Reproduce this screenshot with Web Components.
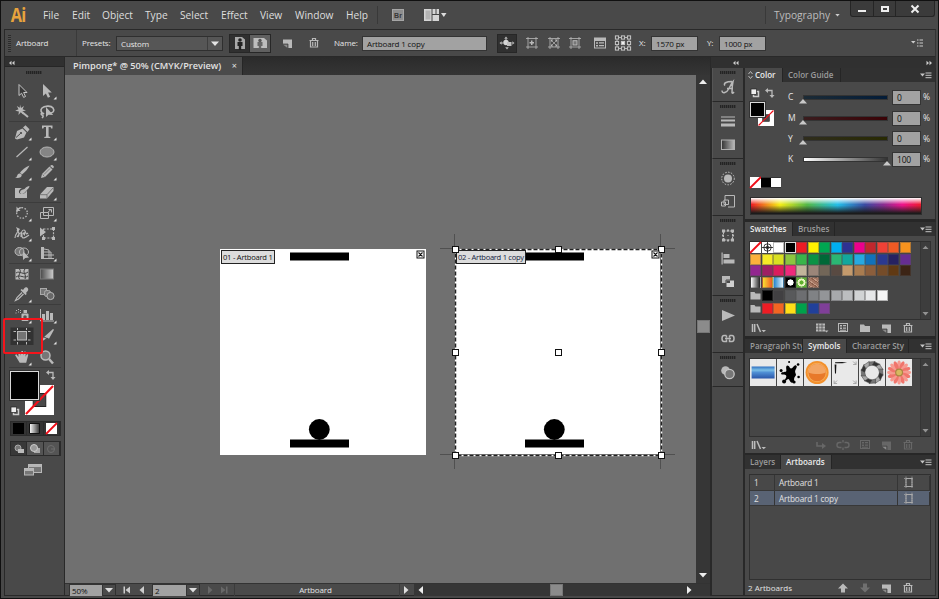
<!DOCTYPE html>
<html lang="en">
<head>
<meta charset="utf-8">
<title>Pimpong</title>
<style>
    html, body {
        margin: 0;
        background: #1b1b1b;
    }
    body {
        width: 939px;
        height: 599px;
        overflow: hidden;
        font: 500 8px/12px "Open Sans", "Noto Sans", sans-serif;
        color: #e6e6e6;
        --panel: #494949;
        --strip: #313131;
        --line: #292929;
        --field: #a2a2a2;
        --icon: #b9b9b9;
    }
</style>
</head>
<body>
<app-window></app-window>

<script>
// Every icon is drawn around its own centre, so 0,0 is the middle of the cell.
const corner = '<path d="M9.5 5.5v3h-3z" fill="#e4e4e4"/>';
const lineIcon = (d, w = 1) => `<path d="${d}" fill="none" stroke="currentColor" stroke-width="${w}"/>`;
const solid = d => `<path d="${d}" fill="currentColor"/>`;

const ICONS = {
    select: '<path d="M-3-6.500v11l2.600-2.300 2 4.200 1.900-.9-1.900-4h3.400z" fill="#3a3a3a" stroke="#c4c4c4"/>',
    direct: solid('M-4-7v12l2.900-2.600 2 4.300 2.200-1-2-4.200h3.700z') + corner,
    wand: lineIcon('M0 1l6 5', 2) + solid('M-2-6.500l1 3.500 3-2-1.400 3.300 3.400 1.200-3.600.8 1 3.500-2.600-2.600-2.400 2.800.5-3.600-3.700-.6 3.300-1.500-1.700-3.200 3 1.600z'),
    lasso: lineIcon('M-3 3c-3-1-4-4-2-6s9-3 11 0 0 5-3 5M-3 3c-2-2-4 0-2 1s1 2 0 3', 1.6) + solid('M-1-4v10l2.600-2.300 4.600.2z'),
    pen: solid('M-7 6.500l2-7.500 5.500-2.500 4 4-2.500 5-7 2z') + solid('M1-4.500l2.500-2.200 4 4L5.500 0z') + '<path d="M-6 5.500l4.500-4" stroke="#454545"/><circle cx="-1" cy="1" r="1.100" fill="#454545"/>' + corner,
    type: solid('M-5-6.500h10.500v3h-1.300l-.6-1.600h-2v9.500l1.700.6v1h-6v-1l1.700-.6v-9.500h-2l-.7 1.600h-1.300z') + corner,
    line: lineIcon('M-5.500 5l11-10', 1.200) + corner,
    ellipse: '<ellipse rx="7" ry="5" fill="#858585" stroke="#b5b5b5"/>' + corner,
    brush: solid('M7.500-6.500C3-4.500 0-2 -2 .5l2 2C3 0 6-3 7.500-6.500z') + solid('M-7 5.500c3 0 1.500-4 4.500-4 2.500 0 3 2.500 1 3.700-1.500 1-4 1-5.500.3z') + corner,
    pencil: solid('M-6 6l1-4L2.500-5.500l3 3L-2 5z') + solid('M3-6l1.500-1c1-.6 3 1.500 2.300 2.300L6-3.400z') + '<path d="M-4.500 2.500l2 2M-3 2.500l6-6" stroke="#6e6e6e" stroke-width=".8"/>' + corner,
    blob: solid('M-7-4h7c-3 1.500-4 4-2 5.500s6 0 7-3.500v8h-12z') + solid('M-2 1c0-4 4-3 5-4.500s3-2.500 4.500-2.500c0 2-2 3-3 4.500S0 4-2 1z'),
    eraser: solid('M-7 2.500l7-7.500h6.500v4L0 6.500h-7z') + '<path d="M-7 2.700h7l6.300-7M0 2.700v3.500" fill="none" stroke="#666" stroke-width=".8"/>' + corner,
    rotate: '<circle r="5.300" fill="none" stroke="#b9b9b9" stroke-width="1.300" stroke-dasharray="1.500 1.500"/><path d="M-5.300-.5a5.300 5.300 0 0 1 5-4.800" fill="none" stroke="#b9b9b9" stroke-width="1.300"/>' + solid('M-5.500-6.500v4.500h4z') + corner,
    scale: lineIcon('M-6.500-.5h8v6h-8zM-3.500-5.500h10v8h-10zM0 0l4-3.500M1.500-3.500h3v3') + corner,
    width: lineIcon('M-7 5c0-5 4-5 3-9M-4 4c2-3 0-6-1-7M-1 4c0-5 1-7 3-7s1 6 4 3M-5 4c4-6 5-5 5-1s4 1 7-1', 1.200) + solid('M-6-6l4 2-2 3zM0 0l3-1 0 4z') + corner,
    free: '<rect x="-3.500" y="-4" width="10" height="9" fill="none" stroke="#b9b9b9" stroke-width="1.200" stroke-dasharray="2 1.300"/>' + solid('M-7-5.500v9l6-4.500zM5-6h3v3H5zM5 4h3v3H5zM-5 4h3v3h-3z'),
    shape: '<ellipse cx="-2.500" cy="-1.500" rx="4.500" ry="4" fill="#777" stroke="#b9b9b9"/><ellipse cx="2" cy="-1" rx="4.500" ry="4" fill="none" stroke="#b9b9b9"/>' + solid('M1-2v9l2.300-2 3.700-.5z') + corner,
    perspective: solid('M-6-6h3v12h-3z') + lineIcon('M-3-4l5 1v8M-3-1h7v7M-3 2h10M-3 5.500h10') + corner,
    mesh: '<rect x="-6.500" y="-5" width="13" height="10.500" fill="#b9b9b9"/><path d="M-6-1c4-3 7 3 12-1M-6 3c4-3 8 2 12-1M-2.500-5c3 4-3 6 0 10M3-5c-3 3 2 6 0 10" stroke="#3f3f3f" fill="none"/>',
    gradient: '<rect x="-6.500" y="-5" width="13" height="10" fill="url(#g)" stroke="#777"/><linearGradient id="g"><stop stop-color="#4a4a4a"/><stop offset="1" stop-color="#ccc"/></linearGradient>',
    dropper: solid('M1-4l1.500-2c2-2 5 1 3.200 3L4-1l.8 1L3.500 1-1.500-4l1.200-1z') + lineIcon('M0-1.500l-5 5-1.500 3 3-1.500 5-5', 1.200) + corner,
    blend: '<rect x="-6.500" y="-5.500" width="6" height="6" fill="#777" stroke="#aaa"/><rect x="-2.500" y="-3.500" width="6" height="6" rx="2" fill="#7a7a7a" stroke="#aaa"/><circle cx="3.500" cy="2" r="3.600" fill="#686868" stroke="#b9b9b9"/>',
    spray: '<rect x="-.5" y="-1.500" width="7" height="7.500" rx="1" fill="#b9b9b9"/><circle cx="3" cy="2" r="1.800" fill="#555"/>' + solid('M1.500-5h3.500v3H1.500zM-2-5h1v1h-1zM-4-6h1v1h-1zM-6-5h1v1h-1zM-4-3.500h1v1h-1zM-6.500-2.500h1v1h-1zM-2-3h1v1h-1z') + corner,
    graph: solid('M-5-1h3v6h-3zM-1-4h3v9h-3zM3-2h3v7H3z') + lineIcon('M-6.500-6v12h13.500') + corner,
    artboard: '<rect x="-11.500" y="-8.500" width="23" height="17.500" fill="#323232"/><rect x="-4.500" y="-4.500" width="9" height="8.500" fill="#747474" stroke="#bbb"/><path d="M-4.500-8v2M4.500-8v2M-4.500 6v2.500M4.500 6v2.500M-8.500-4.500h2.500M6-4.500h2.500M-8.500 4h2.500M6 4h2.500" stroke="#bbb"/>',
    slice: solid('M-6 6l3-5L6-7l1 .7-5 9-1.500-1z') + '<path d="M-3 1l4 2" stroke="#494949"/>' + corner,
    hand: solid('M-7-2l1.500-.7L-3.600 0v-5h1.800l.6 3.800L-.6-6H1l.3 4.600L2.400-5.500l1.500.2-.4 5L5-3l1.300.7-2.100 8h-6.500z') + corner,
    zoom: '<circle cx="-1.500" cy="-1.500" r="4.500" fill="#777" stroke="#b9b9b9" stroke-width="1.500"/>' + lineIcon('M2 2l4 4.500', 2.500),
    swap: lineIcon('M-3-2.500h5v5', 1.300) + solid('M-5-2.500l3-2.500v5zM2 5l-2.500-3h5z'),
    defaults: '<rect x="-1.500" y="-1.500" width="5" height="5" fill="none" stroke="#ccc" stroke-width="1.500"/><rect x="-4" y="-4" width="5.500" height="5.500" fill="#eee" stroke="#222" stroke-width=".7"/>',
    screens: '<rect x="-4.500" y="-5.500" width="13" height="8" fill="#777" stroke="#b9b9b9"/><rect x="-8.500" y="-1.500" width="9" height="6.500" fill="#777" stroke="#b9b9b9"/><path d="M-8 0h8M-4-4H8" stroke="#ccc" stroke-width="1.500"/>',

    note: solid('M-4-3.500H5V5H1V1h-5z') + '<path d="M-4 1.500H.5V5z" fill="#8a8a8a"/><path d="M-4 1H1V5" fill="none" stroke="#494949" stroke-width=".8"/>',
    trash: lineIcon('M-4.500-2.500h9M-1.500-3v-1.500h3V-3M-3.500-2v6h7v-6M-1.300-1v4M1.300-1v4', 1.200),
    folder: solid('M-5-3.500h4l1 1.500h5v6H-5z'),
    grid: solid('M-5-4.500h9v8h-9z') + '<path d="M-2.300-4.500v8M1-4.500v8M-5-2h9M-5 1h9" stroke="#494949" stroke-width=".7"/>' + solid('M3.500 2.500h4l-2 2z'),
    list: '<rect x="-4.500" y="-4.500" width="9" height="8" fill="none" stroke="currentColor"/>' + solid('M-3-3h2v1.500h-2zM-3-.5h2V1h-2zM0-3h3v1.300H0zM0-.5h3V.8H0zM-3 1.700h6v1h-6z'),
    books: lineIcon('M-5.500-4v8M-3.300-4v8M-1-4l3.500 8', 1.500) + solid('M3.500 2h4.500l-2.300 2.300z'),
    up: solid('M0-4.500l5 5H2v4h-4v-4h-3z'),
    down: solid('M0 4.500l5-5H2v-4h-4v4h-3z'),
    place: lineIcon('M-4-3v4h6', 1.600) + solid('M1-2l4 3-4 3z'),
    breaklink: lineIcon('M-1.500-2.500h-2a2.500 2.500 0 0 0 0 5h2M1.500-2.500h2a2.500 2.500 0 0 1 0 5h-2M0-5v2.500M0 5V2.500', 1.400),
    sheet: '<rect x="-3" y="-4" width="6" height="8" fill="none" stroke="currentColor"/><path d="M-3-6v12M3-6v12M-5-4H5M-5 4H5" stroke="currentColor" stroke-width=".7" stroke-dasharray="1.500 1"/>',

    portrait: '<path d="M-5-6H2l3 2.500V6H-5z" fill="#a9a9a9"/><circle cy="-3" r="1.800" fill="#222"/><path d="M-2.500-1h5v4h-1.300v4h-2.400v-4h-1.300z" fill="#222"/>',
    landscape: '<path d="M-6.500-5H4l3 2.500V5H-6.500z" fill="#bdbdbd"/><circle cy="-2.500" r="1.700" fill="#555"/><path d="M-2.500-1h5v4h-1.300v2h-2.400v-2h-1.300z" fill="#666"/>',
    movecopy: '<circle cx="-1" cy="-.5" r="2.700" fill="#d5d5d5"/><path d="M0-1h4.500v4H0z" fill="#c0c0c0"/>' + solid('M-1-6.500l1.800 2.200h-3.600zM0 6.500l1.800-2.200h-3.600zM-7.500 0l2.200-1.800v3.600zM7.500 0L5.300-1.800v3.600z') + lineIcon('M-5.500 0h2M-1-4.500v1.500'),
    marks1: '<path d="M-4-6v12M4-6v12M-6-4.500H6M-6 4H6" stroke="currentColor" stroke-width=".8"/>' + solid('M-1-2.500h1.500v1.500h1.500v1.500H.5v1.500H-1V.5h-1.500v-1.500H-1z'),
    marks2: '<path d="M-4-6v12M4-6v12M-6-4.500H6M-6 4H6" stroke="currentColor" stroke-width=".8"/>' + solid('M-3-3.500h2.500L-3-1zM3-3.500H.5L3-1zM-3 3.500h2.500L-3 1zM3 3.500H.5L3 1z') + lineIcon('M-2-2l4 4M2-2l-4 4', .7),
    marks3: '<path d="M-4-6v12M4-6v12M-6-4.500H6M-6 4H6" stroke="currentColor" stroke-width=".8"/><rect x="-2" y="-2.300" width="4" height="4.300" fill="#777" stroke="currentColor"/>',
    options: '<rect x="-5.500" y="-5" width="11" height="10" fill="none" stroke="currentColor"/>' + solid('M-5-5H5v3H-5zM-4-.7h2v1.400h-2zM-1-.7h5V.5h-5zM-4 2h2v1.400h-2zM-1 2h5v1.300h-5z'),
    refpoint: [-5.500, 0, 5.500].map(y => [-6, 0, 6].map(x => `<rect x="${x - 1.600}" y="${y - 1.600}" width="3.200" height="3.200" fill="${x || y ? 'none' : '#eee'}" stroke="#c8c8c8"/>`).join('')).join('') + lineIcon('M-4-5.500h2M2-5.500h2M-4 5.500h2M2 5.500h2M-6-3.500v2M-6 1.500v2M6-3.500v2M6 1.500v2'),
    panelmenu: solid('M-6-2.500h5l-2.500 3z') + lineIcon('M-.5-3h6M-.5-.7h6M-.5 1.700h6'),
    barmenu: solid('M-6-2h4.500l-2.200 2.600z') + lineIcon('M0-3h1.500M2.500-3h3.500M0 0h1.500M2.500 0h3.500M0 3h1.500M2.500 3h3.500', 1.200),
    layout: '<rect x="-9" y="-6" width="15" height="12" fill="#d5d5d5"/><path d="M-7.500-4.500h5v9h-5z" fill="#b4b4b4"/><path d="M-1-6v12M-1-.5h7M3-6v5.500" stroke="#444"/>' + solid('M8-2h5.500L10.800 2z'),

    glyph: lineIcon('M-6 3c0 4 5 2 7-2s3-6 4-7c-1 4-1 8-1 11 0 1 1 1 2-.5M-1 1h6M-3-2c-2-2 1-4 7-4', 1.500),
    stroke: solid('M-7-5H7v1H-7zM-7-2H7v2H-7zM-7 2H7v3H-7z'),
    fade: '<rect x="-6.500" y="-4.500" width="13" height="9.500" fill="url(#f)" stroke="#b0b0b0"/><linearGradient id="f"><stop stop-color="#333"/><stop offset="1" stop-color="#bbb"/></linearGradient>',
    appearance: '<circle r="4" fill="#b9b9b9"/><circle r="6.300" fill="none" stroke="#c5c5c5" stroke-dasharray="1.500 1.400"/>',
    styles: lineIcon('M-3-1v-5H6.500V5.500H0M-6.500.5h4v4h-4zM-4-1.500h4.500v4.500H-4z'),
    transform: '<rect x="-4.500" y="-4.500" width="9" height="9" fill="none" stroke="#b9b9b9" stroke-dasharray="2 1"/>' + solid('M-6-6h3v3h-3zM3-6h3v3H3zM-6 3h3v3h-3zM3 3h3v3H3zM-1-6h2v2h-2zM-1 4h2v2h-2zM-6-1h2v2h-2zM4-1h2v2H4zM-.5-.5h1v1h-1z'),
    align: solid('M-6.500-6h1.200V6h-1.200zM-4.500-4.500h6v4h-6zM-4.500 1h11v4h-11z'),
    pathfinder: '<path d="M-6-5.500h8v7h-8z" fill="#b9b9b9"/><path d="M-2-1.500h8.500v7.500H-2z" fill="#d0d0d0" stroke="#494949"/><path d="M-1.500-1h3.500v2.500h-3.500z" fill="#494949"/>',
    play: solid('M-6-5.500L7 0-6 5.500z'),
    link: lineIcon('M-1.500-3h-2.500a2 3 0 0 0 0 6h2.500V1M-1.500-3v2M1.500-3H4a2 3 0 0 1 0 6H1.500V1M1.500-3v2M-3 0h6', 1.500),
    symbols: '<circle cx="-2.500" cy="-2" r="4.300" fill="#b9b9b9"/><circle cx="1.500" cy="1.500" r="4.700" fill="#777" stroke="#c5c5c5" stroke-width="1.300"/>',
    none: '<rect x="-5.500" y="-5.500" width="11" height="11" fill="#fff"/><path d="M-5.500 5.500l11-11" stroke="#f00d18" stroke-width="1.800"/>',
    register: '<rect x="-5.500" y="-5.500" width="11" height="11" fill="#fff"/><g fill="none" stroke="#111" stroke-width=".8"><circle r="3.700"/><circle r="1.500"/><path d="M-5.500 0h11M0-5.500v11"/></g>',
    closebox: '<rect x="-3.500" y="-3.500" width="7" height="7" fill="#fff" stroke="#111"/><path d="M-2-2l4 4M2-2l-4 4" stroke="#111" stroke-width="1.100"/>',
    triup: solid('M0-2.500L4 2h-8z'),
    tridown: solid('M0 2.500L4-2h-8z'),
    trileft: solid('M-2.500 0L2-4v8z'),
    triright: solid('M2.500 0L-2-4v8z'),
    first: solid('M-3.500-3.500h1.500v7h-1.500zM-1.500 0L3-3.500v7z'),
    last: solid('M3.500-3.500H2v7h1.500zM1.500 0L-3-3.500v7z'),
    collapse: solid('M-3 0L-.5-2.200V2.200zM0 0l2.500-2.200v4.400z'),
    expand: solid('M0 0l-2.500-2.200v4.400zM3 0L.5-2.200v4.400z'),
    updown: lineIcon('M-2-1l2-2.500L2-1M-2 1l2 2.500L2 1')
};

// Small helper: registers an element from a style block and a markup string.
function define(tag, css, markup) {
    customElements.define(tag, class extends HTMLElement {
        connectedCallback() {
            if (this.shadowRoot) return;
            this.attachShadow({ mode: 'open' });
            const html = typeof markup === 'function' ? markup(this) : markup;
            this.shadowRoot.innerHTML = `<style>* { box-sizing: border-box; } :host { box-sizing: border-box; } ${css}</style>${html}`;
        }
    });
}

const icon = (name, w = 12, h = 12, style = '') => `<ui-icon name="${name}" w="${w}" h="${h}" style="${style}"></ui-icon>`;

define('ui-icon', `
    :host { display: block; flex: none; color: var(--icon); }
    svg { display: block; overflow: visible; }
`, el => {
    const w = el.getAttribute('w') || 12;
    const h = el.getAttribute('h') || 12;
    return `<svg width="${w}" height="${h}" viewBox="${-w / 2} ${-h / 2} ${w} ${h}">${ICONS[el.getAttribute('name')]}</svg>`;
});

define('ui-field', `
    :host { display: block; flex: none; height: 15px; padding: 0 0 0 4px; background: var(--field);
        border: 1px solid #343434; color: #111; line-height: 13px; white-space: nowrap; overflow: hidden; }
`, '<slot></slot>');

// Row of short dark ticks used as a drag handle.
define('ui-grip', `
    :host { display: block; height: 3px; width: 16px; margin: 0 auto;
        background: repeating-linear-gradient(90deg, #242424 0 1px, #393939 1px 2px); }
`, '');

define('menu-bar', `
    :host { display: flex; height: 28px; align-items: center; font-weight: 400; font-size: 10.200px; line-height: 14px; color: #dedede; background: var(--panel); }
    .logo { width: 34px; padding-left: 2px; font: 700 19px/24px "Open Sans", sans-serif; letter-spacing: -1px; color: #e8a33d; transform: scaleX(.86); transform-origin: 0 50%; }
    .item { flex: none; white-space: nowrap; }
    .rule { width: 1px; height: 18px; background: #393939; }
    .br { display: grid; place-items: center; width: 12px; height: 12px; margin: 0 20px 0 14px; background: #8e8e8e; border: 1px solid #a6a6a6; font: 700 7px/9px "Liberation Sans", sans-serif; color: #373737; }
    .space { margin-left: auto; }
    .work { margin: 0 7px 0 8px; width: 54px; color: #bdbdbd; }
    .buttons { display: flex; align-self: flex-start; height: 16px; margin: 0 3px 0 10px; border: 1px solid #252525; border-top: 0; border-radius: 0 0 3px 3px; background: #3b3b3b; }
    .buttons span { display: grid; place-items: center; border-right: 1px solid #252525; }
    .buttons span:last-child { border: 0; }
`, () => `
    <div class="logo" style="margin-left:8px">Ai</div>
    ${[['File', 29], ['Edit', 30], ['Object', 43], ['Type', 35], ['Select', 41], ['Effect', 39], ['View', 35], ['Window', 51], ['Help', 31]]
        .map(([t, w]) => `<span class="item" style="width:${w}px">${t}</span>`).join('')}
    <i class="rule"></i><span class="br">Br</span>
    ${icon('layout', 18, 14, 'color:#ddd')}
    <i class="rule space"></i><span class="item work">Typography</span>
    ${icon('tridown', 5, 8, 'color:#ccc;transform:scale(.55)')}
    <div class="buttons">
        <span style="width:23px"><svg width="10" height="10"><path d="M1 6h8v2H1z" fill="#eee"/></svg></span>
        <span style="width:22px"><svg width="10" height="10"><path d="M2 3h6v4H2z" fill="none" stroke="#eee" stroke-width="2"/></svg></span>
        <span style="width:38px"><svg width="10" height="10"><path d="M1.500 1.500l7 7M8.500 1.500l-7 7" stroke="#eee" stroke-width="2"/></svg></span>
    </div>
`);

define('control-bar', `
    :host { display: flex; align-items: center; height: 28px; background: var(--panel); border: 1px solid var(--line); border-right-color: #333; white-space: nowrap; letter-spacing: -.15px; }
    :host > * { flex: none; }
    .grip { width: 3px; height: 17px; margin: 0 5px 0 3px; background: repeating-linear-gradient(#2b2b2b 0 1px, #4d4d4d 1px 2px); }
    .rule { width: 1px; height: 26px; background: #3a3a3a; }
    .select { display: flex; width: 107px; height: 15px; border: 1px solid #2f2f2f; background: #565656; line-height: 13px; padding-left: 4px; }
    .select ui-icon { margin-left: auto; border-left: 1px solid #3e3e3e; }
    .btn { display: grid; place-items: center; height: 19px; border: 1px solid #272727; background: #303030; }
    .btn.off { background: #606060; }
`, () => `
    <i class="grip"></i><span style="width:60px">Artboard</span><i class="rule"></i>
    <span style="margin-left:5px;width:34px">Presets:</span>
    <div class="select">Custom${icon('tridown', 14, 13, 'color:#e5e5e5')}</div>
    <div class="btn" style="margin-left:6px;width:21px">${icon('portrait', 16, 14)}</div>
    <div class="btn off" style="width:21px;border-left:0">${icon('landscape', 16, 14)}</div>
    ${icon('note', 12, 12, 'margin-left:10px')}
    ${icon('trash', 12, 12, 'margin-left:15px')}
    <span style="margin-left:14px;width:28px">Name:</span>
    <ui-field style="width:125px">Artboard 1 copy</ui-field>
    <div class="btn" style="margin-left:10px;width:20px">${icon('movecopy', 16, 16)}</div>
    ${icon('marks1', 12, 14, 'margin-left:9px')}
    ${icon('marks2', 12, 14, 'margin-left:10px')}
    ${icon('marks3', 12, 14, 'margin-left:9px')}
    ${icon('options', 12, 12, 'margin-left:13px')}
    ${icon('refpoint', 16, 16, 'margin-left:9px')}
    <span style="margin-left:8px;width:12px">X:</span><ui-field style="width:47px">1570 px</ui-field>
    <span style="margin-left:9px;width:12px">Y:</span><ui-field style="width:47px">1000 px</ui-field>
    ${icon('barmenu', 12, 12, 'margin-left:auto;margin-right:12px;color:#ccc')}
`);

const TOOLS = [
    ['select', 'direct', 'wand', 'lasso'],
    ['pen', 'type', 'line', 'ellipse', 'brush', 'pencil', 'blob', 'eraser'],
    ['rotate', 'scale', 'width', 'free', 'shape', 'perspective'],
    ['mesh', 'gradient', 'dropper', 'blend'],
    ['spray', 'graph', 'artboard', 'slice', 'hand', 'zoom']
];

define('fill-stroke', `
    :host { display: grid; grid-template: 14px 15px 15px / 15px 14px 15px; }
    :host([small]) { grid-template: 8px 7px 9px / 8px 7px 9px; }
    .stroke { grid-area: 2 / 2 / 4 / 4; }
    .stroke svg { display: block; width: 100%; height: 100%; }
    .fill { grid-area: 1 / 1 / 3 / 3; z-index: 1; background: #000; border: 1px solid #d9d9d9; outline: 1px solid #333; }
`, `
    <div class="stroke"><svg viewBox="0 0 30 30" preserveAspectRatio="none">
        <rect width="30" height="30" fill="#fff"/><rect x="8.500" y="8.500" width="13" height="13" fill="#494949" stroke="#222"/>
        <path d="M1 29L29 1" stroke="#f3101a" stroke-width="2.200"/></svg></div>
    <div class="fill"></div>
`);

define('tool-box', `
    :host { display: flex; flex-direction: column; position: relative; width: 59px; flex: none; padding-left: 1px; background: var(--panel); }
    header { height: 10px; margin-left: -1px; background: #303030; border-bottom: 1px solid #262626; padding: 2px 0 0 2px; }
    ui-grip { margin: 4px 0 7px 20px; }
    .group { display: grid; grid-template-columns: 26px 24px; place-items: center; margin: 0 3px; height: calc(var(--rows) * 20px + 1px); border-bottom: 1px solid #3c3c3c; }
    .group.tall { height: 63px; }
    .colors { display: grid; grid-template-columns: 44px 10px; padding: 3px 0 0 4px; }
    .modes { display: flex; margin: 5px 3px 0 4px; height: 15px; background: #333; border: 1px solid #2b2b2b; }
    .modes span { flex: 1; display: grid; place-items: center; border-right: 1px solid #2b2b2b; }
    .draw span { background: #545454; }
    .draw span:first-child { background: #383838; }
    .mark { position: absolute; left: -2px; top: 261px; width: 40px; height: 36px; border: 2px solid #f5141b; border-radius: 2px; }
`, () => `
    <header>${icon('collapse', 10, 8, 'color:#ccc')}</header>
    <ui-grip></ui-grip>
    ${TOOLS.map((names, i) => `<div class="group${i === 4 ? ' tall' : ''}" style="--rows:${names.length / 2}">${names.map(n => icon(n, 16, 16)).join('')}</div>`).join('')}
    <div class="colors"><fill-stroke></fill-stroke>${icon('swap', 8, 12, 'margin:-2px 0 0 -7px')}</div>
    <div style="height:0">${icon('defaults', 10, 10, 'margin:-9px 0 0 4px')}</div>
    <div class="modes" style="margin-top:6px">
        <span><svg width="11" height="11"><path d="M0 0h11v11H0z"/></svg></span>
        <span><svg width="11" height="11"><defs><linearGradient id="a"><stop stop-color="#fff"/><stop offset="1" stop-color="#333"/></linearGradient></defs><path d="M.5.500h10v10H.5z" fill="url(#a)" stroke="#111"/></svg></span>
        <span>${icon('none', 11, 11)}</span>
    </div>
    <div class="modes draw">
        <span><svg width="12" height="12"><circle cx="5" cy="5" r="3" fill="#777" stroke="#aaa"/><path d="M5 6h6v4H5z" fill="#bbb"/></svg></span>
        <span><svg width="12" height="12"><path d="M5 5h6v5H5z" fill="#aaa"/><circle cx="5" cy="5" r="3.500" fill="#999" stroke="#ccc"/></svg></span>
        <span><svg width="12" height="12"><circle cx="6" cy="6" r="3.500" fill="none" stroke="#6e6e6e"/><path d="M6 6h4" stroke="#6e6e6e"/></svg></span>
    </div>
    ${icon('screens', 18, 14, 'margin:7px 0 0 18px')}
    <div class="mark"></div>
`);

define('art-board', `
    :host { display: block; position: absolute; width: 206px; height: 206px; background: #fff; }
    svg { position: absolute; left: 0; top: 0; overflow: visible; }
    .name { position: absolute; left: 1px; top: 1px; height: 14px; padding: 0 1px; border: 1px solid #222; background: #dcdcdc; color: #111; font-weight: 400; font-size: 7.600px; letter-spacing: -.24px; line-height: 12px; white-space: nowrap; }
    :host([active]) .name { color: #141c40; letter-spacing: -.3px; }
`, el => {
    const spots = [0, 103, 206];
    const handles = spots.flatMap(y => spots.map(x => `<rect x="${x - 2.500}" y="${y - 2.500}" width="6" height="6" fill="#fff" stroke="#111"/>`)).join('');
    const frame = el.hasAttribute('active') ? `
        <path d="M-.5-15v235M205.500-15v235M-15-.5h235M-15 205.500h235" stroke="#505050"/>
        <rect x=".5" y=".5" width="206" height="206" fill="none" stroke="#fff" stroke-width="1.500"/>
        <rect x=".5" y=".5" width="206" height="206" fill="none" stroke="#222" stroke-width="1.500" stroke-dasharray="4 2"/>` : '';
    return `
        <svg width="206" height="206">
            <path d="M70 3.500h59v8H70zM70 190.500h59v8H70z"/><circle cx="99.300" cy="180.500" r="10.400"/>
            ${frame}
        </svg>
        <span class="name"><slot></slot></span>
        <svg width="206" height="206">${frame ? handles : ''}<g transform="translate(200.500 5.500)">${ICONS.closebox}</g></svg>
    `;
});

define('document-view', `
    :host { display: grid; grid-template: 18px 508px 12px / 631px 14px; width: 645px; flex: none; background: #363636; }
    .tabs { grid-column: 1 / 3; display: flex; background: linear-gradient(#2b2b2b, #353535); }
    .tab { display: flex; width: 178px; padding: 1px 0 0 8px; background: #4b4b4b; border-right: 1px solid #262626; font-weight: 600; font-size: 9.200px; line-height: 15px; white-space: nowrap; color: #e2e2e2; }
    .tab b { margin-left: auto; padding-right: 5px; font-weight: 400; font-size: 9px; }
    .canvas { position: relative; background: #707070; overflow: hidden; }
    .vbar { display: flex; flex-direction: column; align-items: center; justify-content: space-between; padding: 3px 0 4px; color: #ddd; }
    .thumb { background: #8b8b8b; border: 1px solid #777; width: 13px; height: 13px; }
    .status { grid-column: 1 / 3; display: flex; align-items: center; background: #4a4a4a; border-top: 1px solid #333; letter-spacing: -.1px; }
    .drop { display: grid; place-items: center; width: 13px; height: 12px; border: 1px solid #303030; border-left: 0; }
    ui-field { height: 12px; line-height: 12px; border-bottom: 0; }
    .rule { width: 1px; height: 12px; background: #3b3b3b; }
    .hbar { display: flex; flex: 1; align-items: center; height: 12px; margin-left: 4px; padding: 0 3px; background: #363636; }
`, () => `
    <div class="tabs"><div class="tab">Pimpong* @ 50% (CMYK/Preview)<b>×</b></div></div>
    <div class="canvas">
        <art-board style="left:155px;top:174px">01 - Artboard 1</art-board>
        <art-board active style="left:390px;top:174px">02 - Artboard 1 copy</art-board>
    </div>
    <div class="vbar">${icon('triup', 10, 8, 'color:#eee')}<i class="thumb" style="margin-bottom:4px"></i>${icon('tridown', 10, 8, 'color:#eee')}</div>
    <div class="status">
        <ui-field style="width:34px;margin-left:4px;padding-left:2px">50%</ui-field><span class="drop">${icon('tridown', 10, 8, 'color:#ddd')}</span>
        ${icon('first', 8, 8, 'margin-left:7px;color:#ccc')}${icon('trileft', 8, 8, 'margin-left:7px;color:#ccc')}
        <ui-field style="width:35px;margin-left:6px;padding-left:2px">2</ui-field><span class="drop">${icon('tridown', 10, 8, 'color:#ddd')}</span>
        ${icon('triright', 8, 8, 'margin-left:6px;color:#686868')}${icon('last', 8, 8, 'margin-left:6px;color:#686868')}
        <i class="rule" style="margin-left:6px"></i>
        <span style="width:164px;text-align:center;padding-right:3px">Artboard</span><i class="rule"></i>
        ${icon('triright', 8, 8, 'margin-left:2px;color:#ddd')}
        <div class="hbar">${icon('trileft', 8, 8, 'color:#eee')}<i class="thumb" style="margin-left:125px;height:12px"></i>${icon('triright', 8, 8, 'margin-left:auto;margin-right:14px;color:#eee')}</div>
    </div>
`);

define('icon-dock', `
    :host { display: block; width: 31px; flex: none; margin: 0 2px 0 1px; }
    .group { background: var(--panel); border-bottom: 1px solid #282828; border-left: 1px solid #555; padding: 3px 0 1px; }
    .group ui-icon { width: 16px; margin: -1px auto 1px; }
    ui-grip { margin-bottom: 3px; }
    .rest { height: 208px; background: var(--panel); }
`, () => [['glyph'], ['stroke', 'fade'], ['appearance', 'styles'], ['transform', 'align', 'pathfinder'], ['play', 'link'], ['symbols']]
    .map(g => `<div class="group"><ui-grip></ui-grip>${g.map(n => icon(n, 16, 23)).join('')}</div>`).join('') + '<div class="rest"></div>');

define('dock-panel', `
    :host { display: flex; flex-direction: column; background: var(--panel); border-right: 1px solid #2b2b2b; }
    nav { display: flex; flex: none; height: 14px; background: var(--strip); font-weight: 600; line-height: 14px; color: #9b9b9b; }
    nav span { flex: none; padding-left: 5px; border-right: 1px solid #252525; overflow: hidden; white-space: nowrap; }
    nav span.on { background: var(--panel); color: #ececec; }
    nav span ui-icon { display: inline-block; margin: 0 1px 0 -3px; vertical-align: -1px; }
    nav > ui-icon { margin: 2px 3px 0 auto; }
    .body { flex: 1; min-height: 0; display: flex; flex-direction: column; }
`, el => `
    <nav>${el.getAttribute('tabs').split(',').map(t => {
        const [name, width] = t.split(':');
        const on = name.startsWith('*');
        const label = name.replace('*', '');
        return `<span class="${on ? 'on' : ''}" style="width:${width}px">${label === 'Color' ? icon('updown', 7, 8) : ''}${label}</span>`;
    }).join('')}${icon('panelmenu', 12, 12, 'color:#c4c4c4')}</nav>
    <div class="body"><slot></slot></div>
`);

define('color-mixer', `
    :host { display: grid; grid-template: 89px 21px 1fr / 29px 1fr; flex: 1; padding: 5px 4px 0 5px; }
    .icons { display: flex; gap: 5px; height: 14px; margin-bottom: 2px; align-items: center; }
    .rows { display: grid; grid-template-rows: repeat(4, 20.700px); padding-left: 9px; }
    .row { display: grid; grid-template-columns: 10px 94px 29px 12px; align-items: center; font-size: 8.500px; }
    .row ui-field { letter-spacing: -.2px; }
    .track { position: relative; height: 5px; margin: 0 4px 0 5px; border: 1px solid #333; }
    .track ui-icon { position: absolute; top: 2px; left: -5px; color: #c9c9c9; }
    .track ui-icon.end { left: auto; right: -4px; }
    .quick { grid-column: 1 / 3; display: flex; align-items: center; height: 11px; margin-top: 1px; }
    .quick i { width: 10px; height: 11px; border: solid #333; border-width: 1px 0; }
    .spectrum { grid-column: 1 / 3; width: 172px; height: 18px; border: 1px solid #2e2e2e;
        background: linear-gradient(#fff, transparent 40%, transparent 45%, #1b1b1b 95%), linear-gradient(90deg, #ee1c24, #f6ee18 17%, #55b947 33%, #23bfea 51%, #3b4ba2 67%, #8a2d91 78%, #ee148c 89%, #ed1c2e); }
`, () => `
    <div style="margin-top:-1px">
        <div class="icons">${icon('defaults', 10, 10)}${icon('swap', 10, 10)}</div>
        <fill-stroke small style="width:24px"></fill-stroke>
    </div>
    <div class="rows">${[['C', 0, '#1c2b36, #031c38'], ['M', 0, '#3a1c1e, #3a0206'], ['Y', 0, '#2f2d1d, #282a02'], ['K', 100, '#fff, #333']].map(([n, v, c]) => `
        <div class="row"><span>${n}</span><div class="track" style="background:linear-gradient(90deg, ${c})"><ui-icon class="${v ? 'end' : ''}" name="triup" w="8" h="7"></ui-icon></div>
        <ui-field>${v}</ui-field><span style="padding-left:2px">%</span></div>`).join('')}</div>
    <div class="quick">${icon('none', 11, 11)}<i style="background:#000"></i><i style="background:#fff"></i></div>
    <div class="spectrum"></div>
`);

// Framed list with a scroll strip on its right edge.
define('scroll-box', `
    :host { display: flex; flex: none; margin: 5px 4px 0 4px; border: 1px solid #303030; background: #464646; }
    .content { flex: 1; min-width: 0; }
    .bar { display: flex; flex-direction: column; justify-content: space-between; align-items: center; width: 10px; padding: 3px 0; background: #3d3d3d; border-left: 1px solid #353535; }
`, () => `<div class="content"><slot></slot></div><div class="bar">${icon('triup', 5, 5, 'color:#929292;transform:scale(.75)')}${icon('tridown', 5, 5, 'color:#929292;transform:scale(.75)')}</div>`);

define('panel-footer', `
    :host { display: flex; flex: 1; align-items: center; padding: 0 21px 0 8px; }
    .tools { display: flex; gap: 9.700px; margin-left: auto; }
    :host([dim]) .tools { --icon: #676767; }
`, el => `
    ${el.hasAttribute('label') ? `<span style="margin-left:-5px;color:#e4e4e4">${el.getAttribute('label')}</span>` : icon('books', 10, 10, 'color:#bcbcbc')}
    <div class="tools">${el.getAttribute('icons').split(' ').map(n => icon(n, 12, 12, n === 'down' ? 'color:#707070' : '')).join('')}</div>
`);

const SWATCHES = [
    ['none', 'register', '#fff', '#000', '#ed1c24', '#fff200', '#00a651', '#00aeef', '#2e3192', '#ec008c', '#c1272d', '#ef4136', '#f15a24', '#f7931e'],
    ['#fbb03b', '#f5ea26', '#d9e021', '#8cc63f', '#39b54a', '#0a9245', '#006837', '#2bb673', '#12a79d', '#27a9e1', '#1172bb', '#2b3990', '#262261', '#662d91'],
    ['#92278f', '#9e1f63', '#da1c5c', '#ee2a7b', '#c2b59b', '#9b8579', '#726658', '#594a42', '#c49a6c', '#a97c50', '#8b5e3c', '#754c29', '#603913', '#3c2415'],
    ['linear-gradient(90deg,#fff,#222)', 'linear-gradient(90deg,#f7e032,#f15a24)', 'linear-gradient(90deg,#2487ce,#e4f3fc)', 'radial-gradient(circle,#fff 45%,#000 52%)', 'radial-gradient(circle,#5dae2c 28%,#dcedac 36%,#f5f7d5 60%,#62b03a 66%)', 'repeating-linear-gradient(35deg,#8b5e4a 0 1px,#c39a85 1px 2px,#a57763 2px 4px)'],
    ['folder', '#000', '#414042', '#58595b', '#6d6e71', '#808285', '#939598', '#a7a9ac', '#bcbec0', '#d1d3d4', '#e6e7e8', '#f5f5f5'],
    ['folder', '#ed1c24', '#f26522', '#ffde17', '#00a14b', '#21409a', '#7f3f98']
];

define('swatch-grid', `
    :host { display: block; }
    .row { display: flex; gap: .5px; margin-bottom: .700px; }
    .row.wide { margin: 2px 0 0; }
    .row > * { width: 11px; height: 11px; flex: none; }
    i { display: block; border: .5px solid rgba(80, 80, 80, .4); }
`, () => SWATCHES.map((row, n) => `<div class="row${n > 3 ? ' wide' : ''}">${row.map(c => ICONS[c]
    ? icon(c, 11, 11) : `<i style="background:${c}${c === '#000' && n === 0 ? ';outline:1px solid #ddd;outline-offset:-1px' : ''}"></i>`).join('')}</div>`).join(''));

const petals = Array.from({ length: 16 }, (_, i) => `<ellipse cy="-7.500" rx="1.900" ry="4.500" transform="rotate(${i * 22.5})" fill="${i % 2 ? '#f0756c' : '#f69a90'}"/>`).join('');
const wreath = Array.from({ length: 12 }, (_, i) => `<path d="M-3.500-10.500l6.500-.5-2 3.500-4.500 1z" transform="rotate(${i * 30})" fill="${['#777', '#333', '#aaa'][i % 3]}" stroke="#444" stroke-width=".5"/>`).join('');
const SYMBOLS = [
    '<linearGradient id="b" x2="0" y2="1"><stop stop-color="#2e6fc0"/><stop offset=".3" stop-color="#7cbfe6"/><stop offset=".5" stop-color="#4f8fd4"/><stop offset="1" stop-color="#2a55a8"/></linearGradient><rect x="-11.500" y="-6" width="23" height="12" fill="url(#b)"/>',
    '<path d="M-3-7c3 0 2 3 4 3s3-4 5-3-1 4-1 6 2 3 0 5 0 5-2 6-3-1-4-3-3 2-4 1 2-3 1-5-5 0-5-2 4-1 5-2-1-5 1-6z"/><circle cx="-9" cy="-2" r="1.500"/><circle cx="-6" cy="9" r="2"/><circle cx="8" cy="-8" r="1.300"/><circle cx="-1" cy="-10.500" r="1"/><circle cx="8.500" cy="4.500" r="1.300"/><circle cx="4" cy="9.500" r="1.500"/>',
    '<circle r="11.500" fill="#f3902c"/><circle r="9.700" fill="#f6ad57"/><circle r="8.700" fill="#e8792a"/><path d="M-8.700 0a8.700 8.700 0 0 1 17.400 0c-5 2-12 2-17.400 0z" fill="#f3a564"/>',
    '<path d="M-10-10.300l7-.2 5 .8-5 .5-7-.1zM-10.500-8l1.800 0-.4 9h-1z" fill="#111"/><path d="M8-11l3 3M11-11v3H8M-11 11l3-3M-11 8v3h3M8 8l3 3M11 8v3H8" fill="none" stroke="#999" stroke-width=".8"/>',
    wreath,
    petals + '<circle r="4" fill="#a98743"/><circle r="2.800" fill="#d7b85f"/>'
];

define('symbol-grid', `
    :host { display: flex; gap: 1px; }
    svg { display: block; flex: none; background: #e9e9e9; }
`, () => SYMBOLS.map(s => `<svg width="26.200" height="27" viewBox="-13 -13.500 26 27">${s}</svg>`).join(''));

define('artboard-row', `
    :host { display: grid; grid-template-columns: 25px 123px 1fr; height: 15.500px; border-bottom: 1px solid #383838; line-height: 15px; font-size: 8.200px; letter-spacing: -.15px; color: #e2e2e2; }
    :host([active]) { background: #596374; }
    :host > * { border-right: 1px solid #353535; padding-left: 4px; }
    span { border-right: 1px solid #353535; padding-left: 4px; }
    ui-icon { border: 0; margin: 1px 0 0 1px; color: #a9a9a9; }
`, el => `<span>${el.getAttribute('index')}</span><span><slot></slot></span>${icon('sheet', 12, 13)}`);

define('panel-stack', `
    :host { display: block; width: 191px; flex: none; background: #272727; }
    dock-panel { margin-bottom: 3px; }
    .list { height: 106px; background: #484848; border: 1px solid #303030; margin: 5px 4px 0 4px; flex: none; }
`, `
    <dock-panel tabs="*Color:38,Color Guide:58" style="height:151px"><color-mixer></color-mixer></dock-panel>
    <dock-panel tabs="*Swatches:48,Brushes:42" style="height:114px">
        <scroll-box style="height:79px"><swatch-grid></swatch-grid></scroll-box>
        <panel-footer icons="grid list folder note trash"></panel-footer>
    </dock-panel>
    <dock-panel tabs="Paragraph Sty:58,*Symbols:44,Character Sty:62" style="height:114px;margin-bottom:2px">
        <scroll-box style="height:79px"><symbol-grid></symbol-grid></scroll-box>
        <panel-footer dim icons="place breaklink list note trash"></panel-footer>
    </dock-panel>
    <dock-panel tabs="Layers:36,*Artboards:51" style="height:140px;margin:0">
        <div class="list">
            <artboard-row index="1">Artboard 1</artboard-row>
            <artboard-row index="2" active>Artboard 1 copy</artboard-row>
        </div>
        <panel-footer label="2 Artboards" icons="up down note trash"></panel-footer>
    </dock-panel>
`);

define('side-area', `
    :host { display: grid; grid-template: 11px 1fr / 34px 191px; flex: none; background: #292929; }
    header { grid-column: 1 / 3; display: flex; justify-content: space-between; align-items: center; padding: 0 2px 0 20px; background: #303030; }
`, () => `
    <header>${icon('collapse', 10, 8, 'color:#ccc')}${icon('expand', 10, 8, 'color:#ccc')}</header>
    <icon-dock></icon-dock><panel-stack></panel-stack>
`);

define('app-window', `
    :host { display: flex; flex-direction: column; width: 939px; height: 599px; padding: 1px 1px 1px 1px; background: #101010; }
    .frame { flex: 1; display: flex; flex-direction: column; background: #484848; }
    control-bar { margin: 0 2px 0 3px; }
    .work { display: flex; flex: none; height: 539px; margin: 0 2px 0 3px; padding: 0 0 1px 1px; background: #292929; }
    tool-box { margin-right: 1px; }
    document-view { margin-right: 1px; }
`, `
    <div class="frame">
        <menu-bar></menu-bar>
        <control-bar></control-bar>
        <div class="work">
            <tool-box></tool-box>
            <document-view></document-view>
            <side-area></side-area>
        </div>
    </div>
`);
</script>
</body>
</html>
